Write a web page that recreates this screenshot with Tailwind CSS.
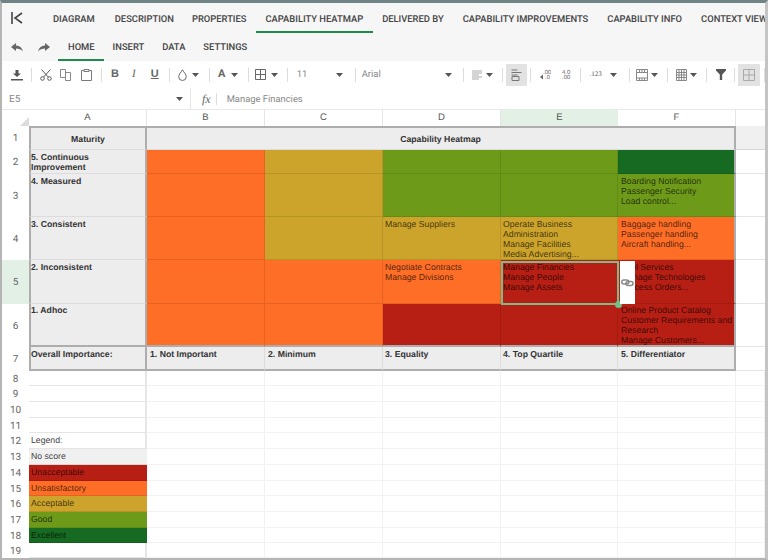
<!DOCTYPE html>
<html lang="en">
<head>
<meta charset="UTF-8">
<title>Capability Heatmap</title>
<script src="https://cdn.jsdelivr.net/npm/@tailwindcss/browser@4"></script>
</head>
<body class="bg-white">
<div class="w-[768px] h-[560px] overflow-hidden flex flex-col border-t-[3px] border-t-[#6f8585] border-l-2 border-l-[#b5b5b5] border-r-[3px] border-r-[#c4c4c4] border-b-2 border-b-[#b5b5b5] font-['Roboto',sans-serif] [text-rendering:geometricPrecision]">

  <!-- tabs -->
  <div class="h-[30px] shrink-0 bg-[#f6f6f6] flex items-stretch text-[9.4px] font-medium text-[#444] whitespace-nowrap overflow-hidden">
    <div class="w-[41px] shrink-0 flex items-center pl-[9px]">
      <svg width="13" height="12" viewBox="0 0 13 12" fill="none" stroke="#444" stroke-width="1.6"><path d="M1 0v12M11 1L4 6l7 5"/></svg>
    </div>
    <div class="pl-[10px] pr-[11px] pt-[4px] flex items-center">DIAGRAM</div>
    <div class="px-[9px] pt-[4px] flex items-center">DESCRIPTION</div>
    <div class="px-[9px] pt-[4px] flex items-center">PROPERTIES</div>
    <div class="px-[10px] pt-[6px] flex items-center border-b-2 border-b-[#1f8a4c]">CAPABILITY HEATMAP</div>
    <div class="px-[9px] pt-[4px] flex items-center">DELIVERED BY</div>
    <div class="px-[10px] pt-[4px] flex items-center">CAPABILITY IMPROVEMENTS</div>
    <div class="px-[9px] pt-[4px] flex items-center">CAPABILITY INFO</div>
    <div class="px-[10px] pt-[4px] flex items-center">CONTEXT VIEW</div>
  </div>

  <!-- ribbon tabs -->
  <div class="h-[28px] shrink-0 bg-[#f6f6f6] flex items-stretch text-[9.4px] font-medium text-[#444] whitespace-nowrap">
    <div class="w-[56px] shrink-0 flex items-center pl-[9px] gap-[15px]">
      <svg width="12" height="9" viewBox="0 0 12 9" fill="#666"><path d="M5 0L0 4l5 4V5.500c3 0 5 .8 7 3C11.300 5 9 2.800 5 2.500z"/></svg>
      <svg width="12" height="9" viewBox="0 0 12 9" fill="#666"><path d="M7 0l5 4-5 4V5.500c-3 0-5 .8-7 3C.7 5 3 2.800 7 2.500z"/></svg>
    </div>
    <div class="pl-[10px] pr-[9px] pt-[4px] flex items-center border-b-2 border-b-[#1f8a4c]">HOME</div>
    <div class="px-[9px] pt-[2px] flex items-center">INSERT</div>
    <div class="px-[9px] pt-[2px] flex items-center">DATA</div>
    <div class="px-[9px] pt-[2px] flex items-center">SETTINGS</div>
  </div>

  <!-- toolbar -->
  <div class="h-[27px] shrink-0 bg-white flex items-center text-[#666]">
    <svg class="ml-[9px]" width="12" height="12" viewBox="0 0 12 12" fill="#555"><path d="M4.500 1h3v3.500H10L6 8 2 4.500h2.500zM0 10h12v1.500H0z"/></svg>
    <div class="ml-[8px] w-px h-[14px] bg-[#ddd]"></div>
    <svg class="ml-[8px]" width="12" height="12" viewBox="0 0 12 12" fill="none" stroke="#555" stroke-width="1"><circle cx="2.500" cy="9.500" r="1.800"/><circle cx="9.500" cy="9.500" r="1.800"/><path d="M1.500 .5L8.300 8M10.500 .5L3.700 8"/></svg>
    <svg class="ml-[8px]" width="11" height="12" viewBox="0 0 11 12" fill="none" stroke="#888"><path d="M.5 .5h5v8h-5zM5.500 3.500h5v8h-5V8.500"/></svg>
    <svg class="ml-[10px]" width="11" height="12" viewBox="0 0 11 12" fill="none" stroke="#777"><path d="M3 1.500H.5v10h10v-10H8M3 .5h5v2H3z"/></svg>
    <div class="ml-[9px] w-px h-[14px] bg-[#ddd]"></div>
    <span class="ml-[8px] w-[10px] text-center text-[11px] font-bold font-['Liberation_Sans',sans-serif]">B</span>
    <span class="ml-[9px] w-[10px] text-center text-[11px] italic font-['Liberation_Serif',serif]">I</span>
    <span class="ml-[11px] w-[10px] text-center text-[11px] font-bold underline font-['Liberation_Sans',sans-serif]">U</span>
    <div class="ml-[9px] w-px h-[14px] bg-[#ddd]"></div>
    <svg class="ml-[8px]" width="9" height="12" viewBox="0 0 9 12" fill="none" stroke="#666"><path d="M4.500 .8C3 3.500.7 5.500.7 7.700a3.800 3.800 0 0 0 7.600 0C8.300 5.500 6 3.500 4.500 .8z"/></svg>
    <svg class="ml-[5px]" width="7" height="4" viewBox="0 0 7 4" fill="#555"><path d="M0 0h7L3.500 4z"/></svg>
    <div class="ml-[10px] w-px h-[14px] bg-[#ddd]"></div>
    <span class="ml-[7px] w-[10px] text-center text-[11px] font-bold">A</span>
    <svg class="ml-[4px]" width="7" height="4" viewBox="0 0 7 4" fill="#555"><path d="M0 0h7L3.500 4z"/></svg>
    <div class="ml-[10px] w-px h-[14px] bg-[#ddd]"></div>
    <svg class="ml-[6px]" width="11" height="11" viewBox="0 0 11 11" fill="none" stroke="#666"><path d="M.5 .5h10v10H.5zM5.500 .5v10M.5 5.500h10"/></svg>
    <svg class="ml-[5px]" width="7" height="4" viewBox="0 0 7 4" fill="#555"><path d="M0 0h7L3.500 4z"/></svg>
    <div class="ml-[9px] w-px h-[14px] bg-[#ddd]"></div>
    <span class="ml-[9px] w-[10px] pt-[1px] text-[9.5px] text-[#888]">11</span>
    <svg class="ml-[29px]" width="7" height="4" viewBox="0 0 7 4" fill="#555"><path d="M0 0h7L3.500 4z"/></svg>
    <div class="ml-[12px] w-px h-[14px] bg-[#ddd]"></div>
    <span class="ml-[6px] w-[21px] pt-[1px] text-[9.5px] text-[#888]">Arial</span>
    <svg class="ml-[62px]" width="7" height="4" viewBox="0 0 7 4" fill="#555"><path d="M0 0h7L3.500 4z"/></svg>
    <div class="ml-[11px] w-px h-[14px] bg-[#ddd]"></div>
    <svg class="ml-[8px]" width="10" height="10" viewBox="0 0 10 10" stroke="#aaa"><path d="M0 1h10M0 3h10M0 5h7M0 7h10M0 9h7"/></svg>
    <svg class="ml-[4px]" width="7" height="4" viewBox="0 0 7 4" fill="#555"><path d="M0 0h7L3.500 4z"/></svg>
    <div class="ml-[9px] w-px h-[14px] bg-[#ddd]"></div>
    <div class="ml-[3px] w-[22px] h-[22px] bg-[#e2e2e2] flex items-center justify-center">
      <svg width="11" height="12" viewBox="0 0 11 12" fill="none" stroke="#777"><path d="M.5 1h6M.5 3.500h10M.5 6h6M1 7.500h7v4H1z"/></svg>
    </div>
    <div class="ml-[3px] w-px h-[14px] bg-[#ddd]"></div>
    <svg class="ml-[9px]" width="11" height="11" viewBox="0 0 11 11" fill="#666"><path d="M0 8l3-2.500V10.500z"/><text x="3" y="5" font-size="6" font-family="Liberation Sans">.00</text><text x="5" y="10.500" font-size="6" font-family="Liberation Sans">.0</text></svg>
    <svg class="ml-[10px]" width="10" height="11" viewBox="0 0 10 11" fill="#666"><text x="1" y="5" font-size="6" font-family="Liberation Sans">4.0</text><text x="1" y="10.500" font-size="6" font-family="Liberation Sans">.00</text></svg>
    <div class="ml-[9px] w-px h-[14px] bg-[#ddd]"></div>
    <span class="ml-[8px] w-[13px] text-[7px] font-['Liberation_Serif',serif] text-[#555]">.123</span>
    <svg class="ml-[8px]" width="7" height="4" viewBox="0 0 7 4" fill="#555"><path d="M0 0h7L3.500 4z"/></svg>
    <div class="ml-[12px] w-px h-[14px] bg-[#ddd]"></div>
    <svg class="ml-[6px]" width="12" height="12" viewBox="0 0 12 12" fill="none" stroke="#888"><path d="M.5 .5h11v11H.5zM.5 3.500h11M.5 9h11M3.500 .5v3M6 .5v3M8.500 .5v3M3.500 9v2.500M6 9v2.500M8.500 9v2.500"/></svg>
    <svg class="ml-[3px]" width="7" height="4" viewBox="0 0 7 4" fill="#555"><path d="M0 0h7L3.500 4z"/></svg>
    <div class="ml-[9px] w-px h-[14px] bg-[#ddd]"></div>
    <svg class="ml-[8px]" width="11" height="12" viewBox="0 0 11 12" fill="none" stroke="#888"><path d="M.5 .5h10v11H.5zM.5 3.500h10M.5 6h10M.5 8.500h10M3 .5v11M5.500 .5v11M8 .5v11"/></svg>
    <svg class="ml-[3px]" width="7" height="4" viewBox="0 0 7 4" fill="#555"><path d="M0 0h7L3.500 4z"/></svg>
    <div class="ml-[9px] w-px h-[14px] bg-[#ddd]"></div>
    <svg class="ml-[9px]" width="10" height="11" viewBox="0 0 10 11" fill="#555"><path d="M0 0h10v1.500L6.200 5.500V11H3.800V5.500L0 1.500z"/></svg>
    <div class="ml-[8px] w-px h-[14px] bg-[#ddd]"></div>
    <div class="ml-[3px] w-[22px] h-[22px] bg-[#e2e2e2] flex items-center justify-center">
      <svg width="12" height="12" viewBox="0 0 12 12" fill="none" stroke="#aaa"><path d="M.5 .5h11v11H.5zM6 .5v11M.5 6h11"/></svg>
    </div>
    <div class="ml-[4px] w-px h-[14px] bg-[#ddd]"></div>
  </div>

  <!-- formula bar -->
  <div class="h-[22px] shrink-0 bg-white flex items-stretch text-[10px] text-[#888] border-b border-b-[#e8e8e8]">
    <div class="w-[189px] shrink-0 pl-[7px] pr-[7px] flex items-center justify-between border-r border-r-[#e4e4e4]">
      <span class="pt-[1px]">E5</span>
      <svg width="7" height="4" viewBox="0 0 7 4" fill="#555"><path d="M0 0h7L3.500 4z"/></svg>
    </div>
    <div class="flex items-center">
      <span class="ml-[11px] text-[12px] italic text-[#666] font-['Liberation_Serif',serif]">fx</span>
      <div class="ml-[5px] w-px h-[12px] bg-[#ddd]"></div>
      <span class="ml-[10px] pt-[3px] text-[9.4px]">Manage Financies</span>
    </div>
  </div>

  <!-- sheet -->
  <div class="relative grow min-h-0">
    <div id="sheet" class="grid grid-cols-[27px_118px_118px_118px_118px_117px_118px_29px] grid-rows-[16px_24px_24px_43px_43px_44px_43px_24px_15px_16px_16px_15px_16px_16px_16px_15px_16px_16px_15px_15px] text-[8.7px] leading-[10px] font-['Liberation_Sans',sans-serif] text-black/70">
      <!-- header row -->
      <div class="relative bg-white"><div class="absolute right-0 bottom-0 w-0 h-0 border-l-[9px] border-l-transparent border-b-[9px] border-b-[#dcdcdc]"></div></div>
      <div class="flex items-center justify-center text-[9.5px] text-[#555] border-r border-black/10">A</div>
      <div class="flex items-center justify-center text-[9.5px] text-[#555] border-r border-black/10">B</div>
      <div class="flex items-center justify-center text-[9.5px] text-[#555] border-r border-black/10">C</div>
      <div class="flex items-center justify-center text-[9.5px] text-[#555] border-r border-black/10">D</div>
      <div class="flex items-center justify-center text-[9.5px] text-[#555] bg-[#e2f0e6]">E</div>
      <div class="flex items-center justify-center text-[9.5px] text-[#555] border-r border-black/10">F</div>
      <div></div>

      <!-- row 1 -->
      <div class="flex items-center justify-center pt-[2px] text-[10px] text-[#666] font-['Roboto',sans-serif]">1</div>
      <div class="bg-[#ededed] flex items-center justify-center font-bold text-[#333] border-l-2 border-r-2 border-t-2 border-b border-[#adadad] border-b-[#dcdcdc]">Maturity</div>
      <div class="col-span-5 bg-[#ededed] flex items-center justify-center font-bold text-[#333] border-t-2 border-r-2 border-b border-[#adadad] border-b-[#dcdcdc]">Capability Heatmap</div>
      <div class="bg-[#f0f0f0] border-b border-black/10"></div>

      <!-- row 2 -->
      <div class="flex items-center justify-center pt-[2px] text-[10px] text-[#666] font-['Roboto',sans-serif]">2</div>
      <div class="bg-[#ededed] pt-[2px] font-bold text-[#333] border-l-2 border-r-2 border-b border-[#adadad] border-b-[#dcdcdc]">5. Continuous<br>Improvement</div>
      <div class="bg-[#fe6e27] border-r border-b border-black/10"></div>
      <div class="bg-[#cca42c] border-r border-b border-black/10"></div>
      <div class="bg-[#6e9a19] border-r border-b border-black/10"></div>
      <div class="bg-[#6e9a19] border-r border-b border-black/10"></div>
      <div class="bg-[#176a21] border-r-2 border-r-[#adadad] border-b border-b-black/10"></div>
      <div class="border-b border-black/10"></div>

      <!-- row 3 -->
      <div class="flex items-center justify-center pt-[2px] text-[10px] text-[#666] font-['Roboto',sans-serif]">3</div>
      <div class="bg-[#ededed] pt-[2px] font-bold text-[#333] border-l-2 border-r-2 border-b border-[#adadad] border-b-[#dcdcdc]">4. Measured</div>
      <div class="bg-[#fe6e27] border-r border-b border-black/10"></div>
      <div class="bg-[#cca42c] border-r border-b border-black/10"></div>
      <div class="bg-[#6e9a19] border-r border-b border-black/10"></div>
      <div class="bg-[#6e9a19] border-r border-b border-black/10"></div>
      <div class="bg-[#6e9a19] pt-[2px] pl-[3px] border-r-2 border-r-[#adadad] border-b border-b-black/10">Boarding Notification<br>Passenger Security<br>Load control...</div>
      <div class="border-b border-black/10"></div>

      <!-- row 4 -->
      <div class="flex items-center justify-center pt-[2px] text-[10px] text-[#666] font-['Roboto',sans-serif]">4</div>
      <div class="bg-[#ededed] pt-[2px] font-bold text-[#333] border-l-2 border-r-2 border-b border-[#adadad] border-b-[#dcdcdc]">3. Consistent</div>
      <div class="bg-[#fe6e27] border-r border-b border-black/10"></div>
      <div class="bg-[#cca42c] border-r border-b border-black/10"></div>
      <div class="bg-[#cca42c] pt-[2px] pl-[2px] border-r border-b border-black/10">Manage Suppliers</div>
      <div class="bg-[#cca42c] pt-[2px] pl-[2px] border-r border-b border-black/10">Operate Business<br>Administration<br>Manage Facilities<br>Media Advertising...</div>
      <div class="bg-[#fe6e27] pt-[2px] pl-[3px] border-r-2 border-r-[#adadad] border-b border-b-black/10">Baggage handling<br>Passenger handling<br>Aircraft handling...</div>
      <div class="border-b border-black/10"></div>

      <!-- row 5 -->
      <div class="flex items-center justify-center pt-[2px] text-[10px] text-[#666] bg-[#e2f0e6] font-['Roboto',sans-serif]">5</div>
      <div class="bg-[#ededed] pt-[2px] font-bold text-[#333] border-l-2 border-r-2 border-b border-[#adadad] border-b-[#dcdcdc]">2. Inconsistent</div>
      <div class="bg-[#fe6e27] border-r border-b border-black/10"></div>
      <div class="bg-[#fe6e27] border-r border-b border-black/10"></div>
      <div class="bg-[#fe6e27] pt-[2px] pl-[2px] border-r border-b border-black/10">Negotiate Contracts<br>Manage Divisions</div>
      <div class="bg-[#b81f14] pt-[2px] pl-[2px] border-r border-b border-black/10">Manage Financies<br>Manage People<br>Manage Assets</div>
      <div class="bg-[#b81f14] pt-[2px] pl-[3px] border-r-2 border-r-[#adadad] border-b border-b-black/10">Fuel Services<br>Manage Technologies<br>Process Orders...</div>
      <div class="border-b border-black/10"></div>

      <!-- row 6 -->
      <div class="flex items-center justify-center pt-[2px] text-[10px] text-[#666] font-['Roboto',sans-serif]">6</div>
      <div class="bg-[#ededed] pt-[1px] font-bold text-[#333] border-l-2 border-r-2 border-b-2 border-[#adadad]">1. Adhoc</div>
      <div class="bg-[#fe6e27] border-r border-r-black/10 border-b-2 border-b-[#adadad]"></div>
      <div class="bg-[#fe6e27] border-r border-r-black/10 border-b-2 border-b-[#adadad]"></div>
      <div class="bg-[#b81f14] border-r border-r-black/10 border-b-2 border-b-[#adadad]"></div>
      <div class="bg-[#b81f14] border-r border-r-black/10 border-b-2 border-b-[#adadad]"></div>
      <div class="bg-[#b81f14] pt-[1px] pl-[3px] border-r-2 border-b-2 border-[#adadad] whitespace-nowrap">Online Product Catalog<br>Customer Requirements and<br>Research<br>Manage Customers...</div>
      <div class="border-b border-black/10"></div>

      <!-- row 7 -->
      <div class="flex items-center justify-center pt-[2px] text-[10px] text-[#666] font-['Roboto',sans-serif]">7</div>
      <div class="bg-[#ededed] pt-[2px] font-bold text-[#333] border-l-2 border-r-2 border-b-2 border-[#adadad]">Overall Importance:</div>
      <div class="bg-[#ededed] pt-[2px] pl-[3px] font-bold text-[#333] border-r border-r-[#dcdcdc] border-b-2 border-b-[#adadad]">1. Not Important</div>
      <div class="bg-[#ededed] pt-[2px] pl-[3px] font-bold text-[#333] border-r border-r-[#dcdcdc] border-b-2 border-b-[#adadad]">2. Minimum</div>
      <div class="bg-[#ededed] pt-[2px] pl-[2px] font-bold text-[#333] border-r border-r-[#dcdcdc] border-b-2 border-b-[#adadad]">3. Equality</div>
      <div class="bg-[#ededed] pt-[2px] pl-[2px] font-bold text-[#333] border-r border-r-[#dcdcdc] border-b-2 border-b-[#adadad]">4. Top Quartile</div>
      <div class="bg-[#ededed] pt-[2px] pl-[3px] font-bold text-[#333] border-r-2 border-b-2 border-[#adadad]">5. Differentiator</div>
      <div class="border-b border-black/10"></div>
    </div>

    <!-- selected cell E5 -->
    <div class="absolute left-[499px] top-[151px] w-[118px] h-[44px] border-2 border-[#7fb98a]"></div>
    <div class="absolute left-[613px] top-[191px] w-[7px] h-[7px] rounded-full bg-[#6fc08a]"></div>
    <!-- link popup -->
    <div class="absolute left-[618px] top-[151px] w-[15px] h-[43px] bg-white flex items-center justify-center">
      <svg width="13" height="8" viewBox="0 0 13 8" fill="none" stroke="#8a8a8a" stroke-width="1.500"><rect x=".8" y="1" width="7" height="4" rx="2"/><rect x="5" y="2.500" width="7" height="4" rx="2"/></svg>
    </div>
  </div>
</div>

<script>
  // empty rows under the table, plus the legend in column A
  const legend = {
    12: ['Legend:', 'bg-white text-[#444] pl-[2px] pt-[2px] border-r-2 border-r-[#e6e6e6] border-b border-b-black/10'],
    13: ['No score', 'bg-[#f0f0f0] text-[#444] pl-[2px] pt-[2px] border-b border-b-black/10'],
    14: ['Unacceptable', 'bg-[#b81f14] pl-[2px] pt-[2px] border-b border-b-black/10'],
    15: ['Unsatisfactory', 'bg-[#fe6e27] pl-[2px] pt-[2px] border-b border-b-black/10'],
    16: ['Acceptable', 'bg-[#cca42c] pl-[2px] pt-[2px] border-b border-b-black/10'],
    17: ['Good', 'bg-[#6e9a19] pl-[2px] pt-[2px] border-b border-b-black/10'],
    18: ['Excellent', 'bg-[#176a21] pl-[2px] pt-[2px] border-b border-b-black/10']
  };
  const sheet = document.getElementById('sheet');
  for (let r = 8; r <= 19; r++) {
    let html = `<div class="flex items-center justify-center pt-[2px] text-[10px] text-[#666] font-['Roboto',sans-serif]">${r}</div>`;
    const cell = legend[r];
    if (cell) {
      html += `<div class="${cell[1]}">${cell[0]}</div>`;
    } else {
      html += '<div class="border-r-2 border-r-[#e6e6e6] border-b border-b-black/10"></div>';
    }
    for (let c = 0; c < 6; c++) {
      html += '<div class="border-r border-b border-black/5"></div>';
    }
    sheet.insertAdjacentHTML('beforeend', html);
  }
</script>
</body>
</html>
